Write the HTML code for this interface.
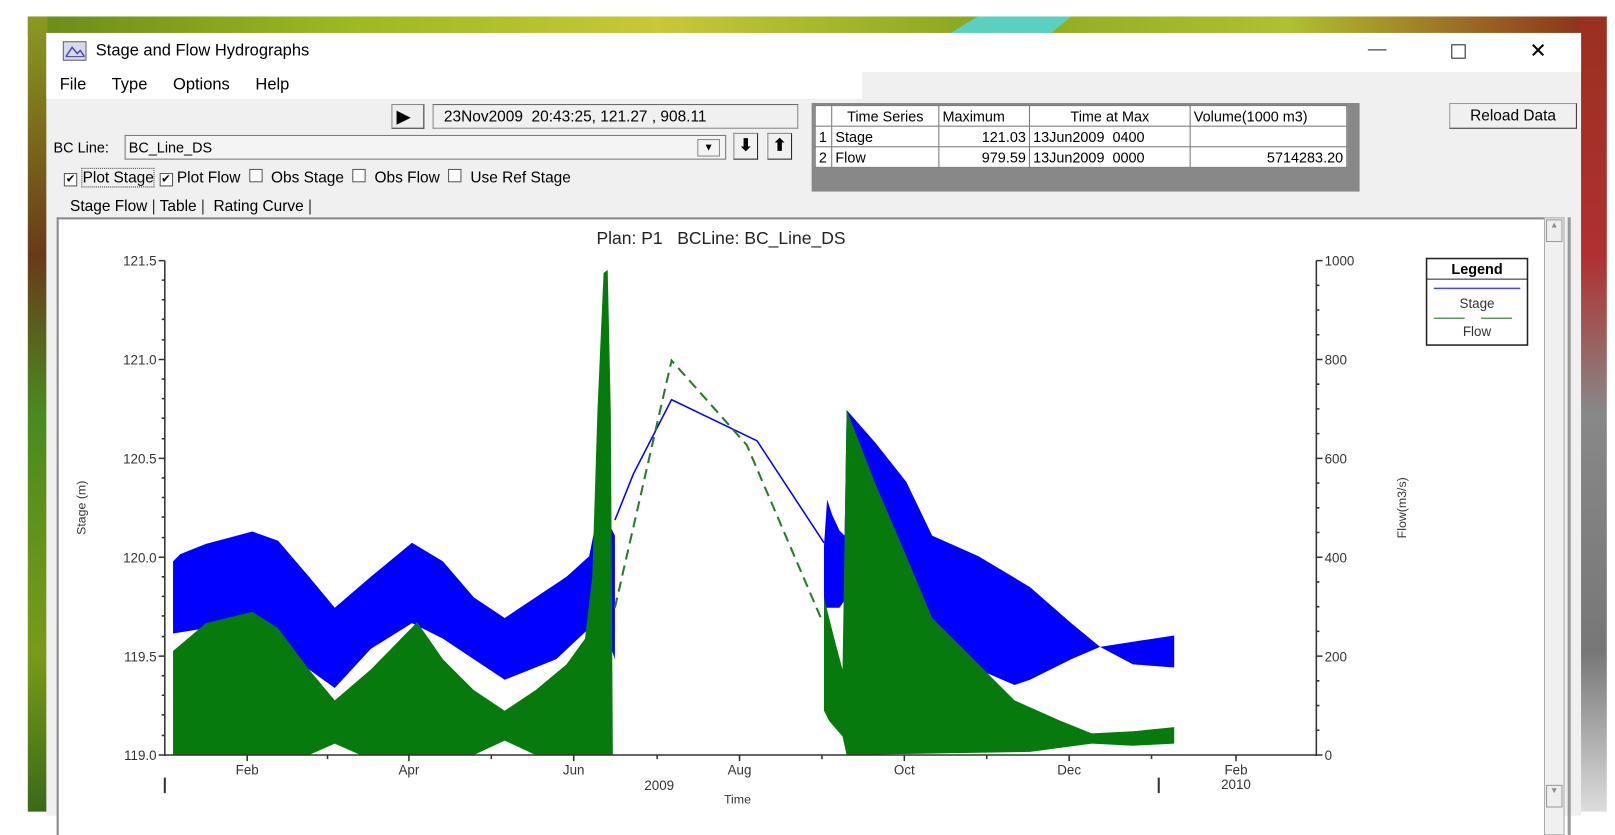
<!DOCTYPE html>
<html><head><meta charset="utf-8"><style>
*{margin:0;padding:0;box-sizing:border-box}
body{width:1615px;height:811px;overflow:hidden;background:#fff;position:relative;font-family:"Liberation Sans",sans-serif;font-size:15px;color:#000}
#w{position:absolute;left:0;top:0;width:1568px;height:788px;transform:scale(1.03);transform-origin:0 0}
.a{position:absolute}
.map{background:linear-gradient(90deg,#6a8a1a,#9cb820 20%,#c8c838 40%,#8aa820 60%,#b0c030 80%,#8a2a18)}
.win{left:45px;top:32px;width:1490px;height:760px;background:#f0f0f0}
.t{white-space:nowrap;font-size:15px}
.cb{width:13px;height:13px;border:1px solid #555;background:#fff;display:inline-block}
table{border-collapse:collapse;font-size:14px;background:#fff}
td{border:1px solid #777;height:20px;padding:0 3px;white-space:nowrap}
</style></head><body><div id="w">
<div class="a map" style="left:27px;top:16px;width:1530px;height:18px"></div>
<div class="a" style="left:910px;top:16px;width:130px;height:16px;background:#5cd0c0;clip-path:polygon(10% 100%,30% 0,100% 0,85% 100%)"></div>
<div class="a" style="left:27px;top:16px;width:19px;height:772px;background:linear-gradient(180deg,#8a9a20,#6a3a18 30%,#4a8a20 50%,#7a9a18 80%,#3a6a18)"></div>
<div class="a" style="left:1533px;top:16px;width:27px;height:772px;background:linear-gradient(180deg,#9a3020,#b03030 30%,#888 50%,#777 80%,#ddd)"></div>
<div class="a win"></div>
<div class="a" style="left:45px;top:32px;width:1490px;height:38px;background:#fff"></div>
<div class="a" style="left:61px;top:40px;width:23px;height:19px;border:1px solid #666;background:#d8d8e8"><svg width="21" height="17"><polyline points="2,14 8,5 13,11 16,8 20,14" fill="none" stroke="#44a" stroke-width="1.4"/><line x1="2" y1="14" x2="20" y2="14" stroke="#44a"/></svg></div>
<div class="a t" style="left:93px;top:41px;font-size:16px">Stage and Flow Hydrographs</div>
<div class="a t" style="left:1328px;top:37px;font-size:18px;color:#444">—</div>
<div class="a" style="left:1409px;top:43px;width:14px;height:14px;border:1px solid #222"></div>
<div class="a t" style="left:1485px;top:37px;font-size:20px">✕</div>
<div class="a" style="left:45px;top:70px;width:792px;height:26px;background:#fff"></div>
<div class="a t" style="left:58px;top:74px;font-size:16px;word-spacing:8px">File&nbsp; Type&nbsp; Options&nbsp; Help</div>
<div class="a" style="left:380px;top:101px;width:32px;height:24px;border:1px solid #888;border-right-color:#333;border-bottom-color:#333;background:#eee;font-size:18px;line-height:22px;padding-left:4px">▶</div>
<div class="a t" style="left:420px;top:101px;width:355px;height:24px;border:1px solid #888;border-top-color:#666;padding:3px 10px;font-size:15px">23Nov2009&nbsp; 20:43:25, 121.27 , 908.11</div>
<div class="a t" style="left:52px;top:135px;font-size:14px">BC Line:</div>
<div class="a t" style="left:121px;top:131px;width:584px;height:24px;border:1px solid #777;background:#f4f4f4;padding:3px 3px;font-size:14px">BC_Line_DS</div>
<div class="a" style="left:677px;top:135px;width:22px;height:17px;border:1px solid #888;font-size:10px;text-align:center;line-height:16px">▼</div>
<div class="a" style="left:712px;top:129px;width:24px;height:26px;border:1px solid #888;border-right-color:#222;border-bottom-color:#222;font-size:16px;text-align:center;line-height:24px;font-weight:bold">⬇</div>
<div class="a" style="left:745px;top:129px;width:24px;height:26px;border:1px solid #888;border-right-color:#222;border-bottom-color:#222;font-size:16px;text-align:center;line-height:24px;font-weight:bold">⬆</div>
<div class="a t" style="left:62px;top:164px;font-size:15px"><span class="cb" style="font-size:11px;line-height:11px;text-align:center">✔</span> <span style="border:1px dotted #444">Plot Stage</span> <span class="cb" style="font-size:11px;line-height:11px;text-align:center">✔</span> Plot Flow&nbsp; <span class="cb"></span>&nbsp; Obs Stage&nbsp; <span class="cb"></span>&nbsp; Obs Flow&nbsp; <span class="cb"></span>&nbsp; Use Ref Stage</div>
<div class="a t" style="left:68px;top:192px;font-size:15px">Stage Flow <span style="color:#333">|</span> Table <span style="color:#333">|</span>&nbsp; Rating Curve <span style="color:#333">|</span></div>
<div class="a" style="left:788px;top:100px;width:532px;height:86px;background:#888"></div>
<table class="a" style="left:791px;top:102px">
<tr><td style="width:16px"></td><td style="width:104px;text-align:center">Time Series</td><td style="width:88px">Maximum</td><td style="width:156px;text-align:center">Time at Max</td><td style="width:152px">Volume(1000 m3)</td></tr>
<tr><td>1</td><td>Stage</td><td style="text-align:right">121.03</td><td>13Jun2009&nbsp; 0400</td><td></td></tr>
<tr><td>2</td><td>Flow</td><td style="text-align:right">979.59</td><td>13Jun2009&nbsp; 0000</td><td style="text-align:right">5714283.20</td></tr>
</table>
<div class="a t" style="left:1407px;top:100px;width:124px;height:25px;border:1px solid #999;border-right-color:#333;border-bottom-color:#333;text-align:center;padding-top:3px">Reload Data</div>
<div class="a" style="left:55px;top:211px;width:1444px;height:600px;background:#fff;border-top:2px solid #888;border-left:2px solid #888"></div>
<div class="a" style="left:1499px;top:211px;width:20px;height:600px;background:#f0f0f0;border:1px solid #aaa"></div>
<div class="a" style="left:1501px;top:213px;width:16px;height:22px;border:1px solid #999;background:#eee;font-size:8px;text-align:center;color:#888">▲</div>
<div class="a" style="left:1501px;top:762px;width:16px;height:22px;border:1px solid #999;background:#eee;font-size:8px;text-align:center;color:#888">▼</div>
<div class="a" style="left:1522px;top:211px;width:3px;height:600px;background:#999"></div>
<svg class="a" style="left:0;top:0" width="1568" height="788" font-family="Liberation Sans,sans-serif">
<text x="700" y="237" font-size="17" text-anchor="middle" fill="#222">Plan: P1&#160;&#160; BCLine: BC_Line_DS</text>
<g fill="#0000ff">
<polygon points="168,545 175,538 200,528 245,516 270,525 300,560 325,590 360,560 400,527 430,545 460,580 490,600 520,580 550,560 572,540 578,510 585,490 592,510 597,520 597,640 590,620 572,610 540,640 490,660 460,640 430,620 400,605 360,630 325,668 300,650 270,620 245,600 200,610 168,615"/>
<polygon points="800,530 803,485 808,500 815,515 820,520 822,398 850,430 880,468 905,520 950,540 1000,570 1040,605 1068,628 1100,623 1140,617 1140,648 1100,645 1068,628 1040,640 1000,660 985,665 950,650 920,625 880,560 840,560 822,580 815,590 800,590"/>
</g>
<g fill="#077a0d">
<polygon points="168,632 200,605 245,594 270,610 300,650 325,680 360,650 405,604 430,640 460,670 490,690 520,670 550,645 568,620 575,560 580,400 586,265 590,262 593,400 595,733 168,733"/>
<polygon points="800,580 810,620 818,650 822,398 850,470 880,540 905,600 935,630 985,680 1030,700 1060,712 1100,710 1140,706 1140,722 1100,724 1060,722 1000,730 822,733 818,715 805,700 800,690"/>
</g>
<g fill="#fff"><polygon points="300,733 325,722 350,733"/><polygon points="460,733 490,719 520,733"/></g>
<polyline points="597,505 615,460 652,388 735,428 800,527" fill="none" stroke="#0000ff" stroke-width="1.5"/>
<polyline points="597,590 652,350 725,432 797,600" fill="none" stroke="#2a7a2a" stroke-width="2" stroke-dasharray="10,6"/>
<g stroke="#333" stroke-width="1.5" fill="none">
<line x1="160" y1="253" x2="160" y2="734"/><line x1="1278" y1="253" x2="1278" y2="734"/><line x1="160" y1="733" x2="1278" y2="733"/>
<path d="M154 253h6M154 349h6M154 445h6M154 541h6M154 637h6M154 733h6M157 272h3M157 291h3M157 310h3M157 330h3M157 368h3M157 387h3M157 406h3M157 426h3M157 464h3M157 483h3M157 502h3M157 522h3M157 560h3M157 579h3M157 598h3M157 618h3M157 656h3M157 675h3M157 694h3M157 714h3"/>
<path d="M1278 253h6M1278 349h6M1278 445h6M1278 541h6M1278 637h6M1278 733h6M1278 277h3M1278 301h3M1278 325h3M1278 373h3M1278 397h3M1278 421h3M1278 469h3M1278 493h3M1278 517h3M1278 565h3M1278 589h3M1278 613h3M1278 661h3M1278 685h3M1278 709h3"/>
<path d="M240 733v6M318 733v4M397 733v6M477 733v4M557 733v6M638 733v4M718 733v6M798 733v4M878 733v6M958 733v4M1038 733v6M1118 733v4M1200 733v6"/>
<path d="M160 755v15M1125 755v15" stroke-width="2"/>
</g>
<g font-size="13" fill="#333">
<g text-anchor="end"><text x="152" y="258">121.5</text><text x="152" y="354">121.0</text><text x="152" y="450">120.5</text><text x="152" y="546">120.0</text><text x="152" y="642">119.5</text><text x="152" y="738">119.0</text></g>
<text x="1286" y="258">1000</text><text x="1286" y="354">800</text><text x="1286" y="450">600</text><text x="1286" y="546">400</text><text x="1286" y="642">200</text><text x="1286" y="738">0</text>
<g text-anchor="middle"><text x="240" y="752">Feb</text><text x="397" y="752">Apr</text><text x="557" y="752">Jun</text><text x="718" y="752">Aug</text><text x="878" y="752">Oct</text><text x="1038" y="752">Dec</text><text x="1200" y="752">Feb</text><text x="1200" y="766">2010</text><text x="640" y="767">2009</text><text x="716" y="780" font-size="12">Time</text></g>
<text transform="translate(83,493) rotate(-90)" text-anchor="middle" font-size="12">Stage (m)</text>
<text transform="translate(1365,493) rotate(-90)" text-anchor="middle" font-size="12">Flow(m3/s)</text>
</g>
<rect x="1385" y="251" width="98" height="84" fill="#fff" stroke="#222" stroke-width="1.5"/>
<line x1="1385" y1="271" x2="1483" y2="271" stroke="#222"/>
<text x="1434" y="266" font-size="14" font-weight="bold" text-anchor="middle">Legend</text>
<line x1="1392" y1="280" x2="1476" y2="280" stroke="#4444ff" stroke-width="1.5"/>
<text x="1434" y="299" font-size="13" text-anchor="middle" fill="#333">Stage</text>
<path d="M1392 309h30M1438 309h30" stroke="#3a8a3a" stroke-width="1.2"/>
<text x="1434" y="326" font-size="13" text-anchor="middle" fill="#333">Flow</text>
</svg>
</div></body></html>
